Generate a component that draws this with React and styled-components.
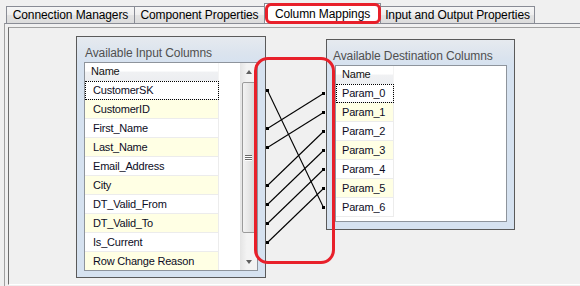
import React from "react";
import styled, { createGlobalStyle } from "styled-components";

const Global = createGlobalStyle`
  html, body { margin: 0; padding: 0; background: #f0f0f0; }
  * { box-sizing: border-box; }
`;

const Root = styled.div`
  position: relative;
  width: 580px;
  height: 286px;
  overflow: hidden;
  background: #f0f0f0;
  font-family: "Liberation Sans", Arial, sans-serif;
  color: #111;
`;

const TabStrip = styled.div`
  display: flex;
  align-items: flex-end;
  height: 23px;
  padding-left: 6px;
`;

const Tab = styled.div`
  position: relative;
  width: ${(p) => p.$w}px;
  height: ${(p) => (p.$active ? 20 : 17)}px;
  margin-left: -1px;
  border: 1px solid #898c95;
  border-bottom: none;
  background: ${(p) =>
    p.$active
      ? "#ffffff"
      : "linear-gradient(#f6f6f6, #eeeeee 50%, #e3e3e3 51%, #dcdcdc)"};
  z-index: ${(p) => (p.$active ? 2 : 1)};
  display: flex;
  align-items: center;
  justify-content: center;
  font-size: 12px;
  letter-spacing: -0.1px;
  white-space: nowrap;
  color: #000;
  &:first-child { margin-left: 0; }
`;

const TabPanel = styled.div`
  margin-left: 4px;
  height: 263px;
  border-top: 1px solid #898c95;
  border-left: 1px solid #a0a0a0;
  padding: 3px 0 0 3px;
`;

const Sunken = styled.div`
  height: 258px;
  border-left: 1px solid #6d6d6d;
  border-top: 1px solid #a0a0a0;
  border-bottom: 1px solid #ffffff;
  display: flex;
  align-items: flex-start;
  padding-left: 67px;
`;

const Box = styled.div`
  width: ${(p) => p.$w}px;
  height: ${(p) => p.$h}px;
  margin-top: ${(p) => p.$top}px;
  border: 1px solid #5a5a5a;
  background: linear-gradient(#e6eaef, #dae3ee 18px, #d6e2f0 26px, #d6e2f0);
  padding: 0 7px 0 ${(p) => p.$pl}px;
  display: flex;
  flex-direction: column;
`;

const BoxTitle = styled.div`
  height: 25px;
  padding-top: 9px;
  margin-left: ${(p) => p.$ml}px;
  line-height: 14px;
  font-size: 12px;
  letter-spacing: -0.1px;
  color: #505050;
  white-space: nowrap;
`;

const List = styled.div`
  width: ${(p) => p.$w}px;
  height: ${(p) => p.$h}px;
  border: 1px solid #8e949c;
  background: #ffffff;
  display: flex;
  overflow: hidden;
`;

const Column = styled.div`
  flex: 1;
  display: flex;
  flex-direction: column;
  overflow: hidden;
`;

const HeaderCell = styled.div`
  width: ${(p) => p.$w}px;
  height: 18px;
  flex: none;
  line-height: 17px;
  padding-left: 6px;
  font-size: 11px;
  letter-spacing: -0.2px;
  background: linear-gradient(#ffffff, #ffffff 45%, #f0f1f3 50%, #eceef1);
  border-right: 1px solid #f4f4f4;
`;

const Cell = styled.div`
  width: ${(p) => p.$w}px;
  height: 19px;
  flex: none;
  line-height: 18px;
  padding-left: ${(p) => p.$pl}px;
  font-size: 11px;
  letter-spacing: -0.2px;
  white-space: nowrap;
  background: ${(p) => (p.$alt ? "#ffffe4" : "#ffffff")};
  border-bottom: 1px solid #ececec;
  border-right: 1px solid #ececec;
  color: #0c0c24;
  ${(p) => (p.$focus ? "outline: 1px dotted #000; outline-offset: -1px;" : "")}
`;

const Scrollbar = styled.div`
  width: 17px;
  flex: none;
  display: flex;
  flex-direction: column;
  align-items: center;
  background: linear-gradient(90deg, #e4e4e4, #f3f3f3 40%, #f3f3f3);
`;

const ScrollButton = styled.div`
  width: 17px;
  height: 17px;
  flex: none;
  display: flex;
  align-items: center;
  justify-content: center;
`;

const Arrow = styled.div`
  width: 0;
  height: 0;
  border-left: 3.5px solid transparent;
  border-right: 3.5px solid transparent;
  ${(p) =>
    p.$down
      ? "border-top: 4px solid #606060;"
      : "border-bottom: 4px solid #606060;"}
`;

const Thumb = styled.div`
  width: 14px;
  height: 151px;
  margin-top: 2px;
  border: 1px solid #9b9b9b;
  border-radius: 2px;
  background: linear-gradient(90deg, #f3f3f3, #e6e6e6 50%, #d6d6d6);
  display: flex;
  flex-direction: column;
  align-items: center;
  justify-content: center;
  gap: 1px;
`;

const Grip = styled.div`
  width: 7px;
  height: 1px;
  background: #6a6a6a;
  box-shadow: 0 1px 0 #ffffff;
`;

const Spacer = styled.div`
  flex: 1;
`;

const Connector = styled.svg`
  flex: none;
  display: block;
`;

const Highlight = styled.div`
  position: absolute;
  left: ${(p) => p.$x}px;
  top: ${(p) => p.$y}px;
  width: ${(p) => p.$w}px;
  height: ${(p) => p.$h}px;
  border: 3px solid #e8202a;
  border-radius: ${(p) => p.$r}px;
  pointer-events: none;
  z-index: 5;
`;

const tabs = [
  { label: "Connection Managers", w: 129 },
  { label: "Component Properties", w: 131 },
  { label: "Column Mappings", w: 117, active: true },
  { label: "Input and Output Properties", w: 155 },
];

const inputCols = [
  "CustomerSK",
  "CustomerID",
  "First_Name",
  "Last_Name",
  "Email_Address",
  "City",
  "DT_Valid_From",
  "DT_Valid_To",
  "Is_Current",
  "Row Change Reason",
];

const destCols = ["Param_0", "Param_1", "Param_2", "Param_3", "Param_4", "Param_5", "Param_6"];

// [input index, dest index]
const mappings = [
  [0, 6],
  [2, 0],
  [3, 1],
  [5, 2],
  [6, 3],
  [7, 4],
  [8, 5],
];

function ScrollBar() {
  return (
    <Scrollbar>
      <ScrollButton>
        <Arrow />
      </ScrollButton>
      <Thumb>
        <Grip />
        <Grip />
        <Grip />
      </Thumb>
      <Spacer />
      <ScrollButton>
        <Arrow $down />
      </ScrollButton>
    </Scrollbar>
  );
}

function Lines() {
  // svg origin at page (266, 28)
  const leftY = (i) => 81 + i * 19 + 9 - 28;
  const rightY = (j) => 84 + j * 19 + 9 - 28;
  return (
    <Connector width="60" height="250" viewBox="0 0 60 250">
      {mappings.map(([i, j]) => (
        <g key={i}>
          <line x1="1.5" y1={leftY(i) + 0.5} x2="57.5" y2={rightY(j) + 0.5} stroke="#000" strokeWidth="1.1" />
          <rect x="0" y={leftY(i) - 1} width="3" height="3" fill="#000" />
          <rect x="56" y={rightY(j) - 1} width="3" height="3" fill="#000" />
        </g>
      ))}
    </Connector>
  );
}

export default function App() {
  return (
    <Root>
      <Global />
      <TabStrip>
        {tabs.map((t) => (
          <Tab key={t.label} $w={t.w} $active={t.active}>
            {t.label}
          </Tab>
        ))}
      </TabStrip>
      <TabPanel>
        <Sunken>
          <Box $w={190} $h={242} $top={8} $pl={7}>
            <BoxTitle $ml={1}>Available Input Columns</BoxTitle>
            <List $w={174} $h={209}>
              <Column>
                <HeaderCell $w={134}>Name</HeaderCell>
                {inputCols.map((c, i) => (
                  <Cell key={c} $w={134} $pl={8} $alt={i % 2 === 1} $focus={i === 0}>
                    {c}
                  </Cell>
                ))}
              </Column>
              <ScrollBar />
            </List>
          </Box>
          <Lines />
          <Box $w={189} $h={191} $top={11} $pl={8}>
            <BoxTitle $ml={-2}>Available Destination Columns</BoxTitle>
            <List $w={172} $h={157}>
              <Column>
                <HeaderCell $w={58}>Name</HeaderCell>
                {destCols.map((c, i) => (
                  <Cell key={c} $w={58} $pl={6} $alt={i % 2 === 1} $focus={i === 0}>
                    {c}
                  </Cell>
                ))}
              </Column>
            </List>
          </Box>
        </Sunken>
      </TabPanel>
      <Highlight $x={265} $y={3} $w={116} $h={21} $r={6} />
      <Highlight $x={254} $y={57} $w={81} $h={207} $r={14} />
    </Root>
  );
}
